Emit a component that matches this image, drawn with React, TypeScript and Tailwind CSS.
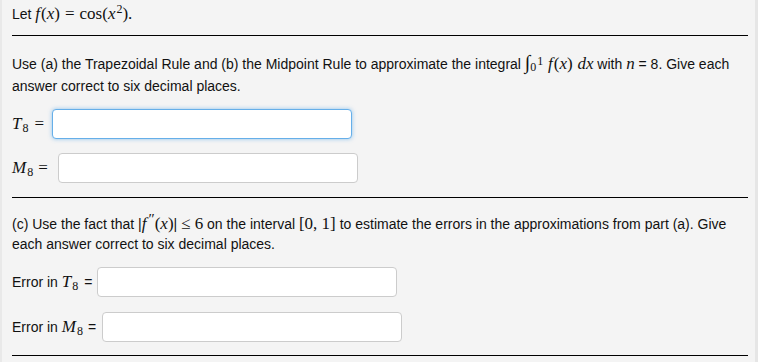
import React from "react";

const serif = "font-['Liberation_Serif','Times_New_Roman',serif]";

function I({ children, className = "" }: { children: React.ReactNode; className?: string }) {
  return <span className={`${serif} italic ${className}`}>{children}</span>;
}
function R({ children, className = "" }: { children: React.ReactNode; className?: string }) {
  return <span className={`${serif} ${className}`}>{children}</span>;
}

function Input({ focused }: { focused?: boolean }) {
  return (
    <div
      className={
        focused
          ? "w-[300px] h-[30px] bg-white rounded-[4px] border border-[#66afe9] shadow-[0_0_4px_rgba(102,175,233,0.7)]"
          : "w-[300px] h-[30px] bg-white rounded-[4px] border border-[#cccccc]"
      }
    />
  );
}

function Sub8({ letter }: { letter: string }) {
  return (
    <span className={`${serif} text-[17px]`}>
      <span className="italic">{letter}</span>
      <span className="text-[12px] relative top-[3px] ml-[1px]">8</span>
    </span>
  );
}

export default function App() {
  return (
    <div className="w-[758px] h-[362px] bg-[#f4f4f4] border-l-2 border-l-[#e9e9e9] border-r-[3px] border-r-[#e6e6e6] pl-[10px] pr-[7px] font-['Liberation_Sans',Arial,sans-serif] text-[14px] text-[#111] overflow-hidden">
      <div className="pt-[3px] leading-[22px]">
        Let{" "}
        <span className="text-[17px]">
          <I>f</I>
          <R className="ml-[1px]">(</R>
          <I>x</I>
          <R>)</R>
          <R className="mx-[5px]">=</R>
          <R>cos(</R>
          <I>x</I>
          <R>
            <sup className="text-[12px] ml-[1px]">2</sup>).
          </R>
        </span>
      </div>
      <div className="mt-[10px] h-[1px] bg-black" />
      <div className="mt-[17px] leading-[22px]">
        Use (a) the Trapezoidal Rule and (b) the Midpoint Rule to approximate the integral{" "}
        <span className="text-[17px]">
          <R>
            <span className="italic text-[20px] leading-[0]">∫</span>
            <sub className="text-[12px] relative top-[2px]">0</sub>
            <sup className="text-[12px] relative -top-[4px] ml-[1px]">1</sup>
          </R>{" "}
          <I>f</I>
          <R className="ml-[1px]">(</R>
          <I>x</I>
          <R>)</R> <I>dx</I>
        </span>{" "}
        with <I className="text-[17px]">n</I> = 8. Give each
        <br />
        answer correct to six decimal places.
      </div>
      <div className="mt-[12px] flex items-center">
        <div className="w-[40px] flex items-center">
          <Sub8 letter="T" />
          <R className="text-[17px] ml-[6px]">=</R>
        </div>
        <Input focused />
      </div>
      <div className="mt-[14px] flex items-center">
        <div className="w-[46px] flex items-center">
          <Sub8 letter="M" />
          <R className="text-[17px] ml-[5px]">=</R>
        </div>
        <Input />
      </div>
      <div className="mt-[14px] h-[1px] bg-black" />
      <div className="mt-[16px] leading-[20px]">
        (c) Use the fact that |
        <span className="text-[17px]">
          <I>f</I>
          <R>
            <span className="text-[15px] relative -top-[5px] ml-[2px]">″</span>(
          </R>
          <I>x</I>
          <R>)</R>
        </span>
        |{" "}
        <R className="text-[17px]">≤ 6</R> on the interval{" "}
        <R className="text-[17px]">[0, 1]</R> to estimate the errors in the approximations from part (a). Give
        <br />
        each answer correct to six decimal places.
      </div>
      <div className="mt-[13px] flex items-center">
        <div className="w-[85px] flex items-center">
          <span>Error in&nbsp;</span>
          <Sub8 letter="T" />
          <span className="ml-[6px]">=</span>
        </div>
        <Input />
      </div>
      <div className="mt-[15px] flex items-center">
        <div className="w-[90px] flex items-center">
          <span>Error in&nbsp;</span>
          <Sub8 letter="M" />
          <span className="ml-[5px]">=</span>
        </div>
        <Input />
      </div>
      <div className="mt-[13px] h-[1px] bg-black" />
    </div>
  );
}
